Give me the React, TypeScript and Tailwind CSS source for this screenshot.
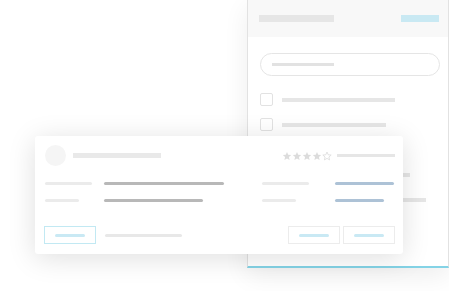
import React from 'react';

const Bar: React.FC<{ w: number; c: string; h?: number }> = ({ w, c, h = 3 }) => (
  <div className="rounded-full" style={{ width: w, height: h, background: c }} />
);

const Star: React.FC<{ filled: boolean }> = ({ filled }) => (
  <svg width="10" height="10" viewBox="0 0 24 24">
    <path
      d="M12 2.5l2.9 6.6 7.1.6-5.4 4.7 1.6 7-6.2-3.7-6.2 3.7 1.6-7L2 9.7l7.1-.6z"
      fill={filled ? '#dcdcdc' : 'none'}
      stroke="#dcdcdc"
      strokeWidth={filled ? 0 : 2}
      strokeLinejoin="round"
    />
  </svg>
);

const rows = [
  { w: 113 },
  { w: 104 },
  { w: 120 },
  { w: 128 },
  { w: 144 },
];

const App: React.FC = () => {
  return (
    <div className="relative w-[449px] h-[291px] bg-white overflow-hidden">
      {/* back panel */}
      <div className="absolute left-[247px] top-0 w-[202px] h-[268px] bg-white border-x border-[#e2e2e2] border-b-2 border-b-[#84d3e6] shadow-[0_8px_24px_rgba(0,0,0,0.07)]">
        <div className="h-[37px] bg-[#f8f8f8] flex items-center justify-between pl-[11px] pr-[9px]">
          <div className="w-[75px] h-[7px] bg-[#e6e6e6]" />
          <div className="w-[38px] h-[7px] bg-[#c9e9f3]" />
        </div>
        <div className="pl-[12px] pr-[8px] pt-[16px]">
          <div className="h-[23px] rounded-full border border-[#e5e5e5] flex items-center pl-[11px]">
            <div className="w-[62px] h-[3px] bg-[#e2e2e2]" />
          </div>
          <div className="mt-[17px] flex flex-col gap-[12px]">
            {rows.map((r, i) => (
              <div key={i} className="flex items-center gap-[9px] h-[13px]">
                <div className="w-[13px] h-[13px] rounded-[2px] border border-[#e2e2e2]" />
                <div className="h-[4px] bg-[#e6e6e6]" style={{ width: r.w }} />
              </div>
            ))}
          </div>
        </div>
      </div>

      {/* front card */}
      <div className="absolute left-[35px] top-[136px] w-[368px] h-[118px] bg-white rounded-[3px] shadow-[0_4px_28px_rgba(0,0,0,0.13)] pt-[9px] pl-[10px] pr-[8px]">
        <div className="flex items-center h-[21px]">
          <div className="w-[21px] h-[21px] rounded-full bg-[#f5f5f5]" />
          <div className="ml-[7px] w-[88px] h-[5px] bg-[#e9e9e9]" />
          <div className="ml-auto flex items-center gap-[0px]">
            <Star filled />
            <Star filled />
            <Star filled />
            <Star filled />
            <Star filled={false} />
          </div>
          <div className="ml-[5px] w-[58px] h-[3px] bg-[#e6e6e6]" />
        </div>

        <div className="mt-[16px] flex items-center">
          <div className="w-[59px]"><Bar w={47} c="#ebebeb" /></div>
          <div className="w-[158px]"><Bar w={120} c="#b8b8b8" /></div>
          <div className="w-[73px]"><Bar w={47} c="#ebebeb" /></div>
          <Bar w={59} c="#adc2d6" />
        </div>
        <div className="mt-[14px] flex items-center">
          <div className="w-[59px]"><Bar w={34} c="#ebebeb" /></div>
          <div className="w-[158px]"><Bar w={99} c="#b8b8b8" /></div>
          <div className="w-[73px]"><Bar w={34} c="#ebebeb" /></div>
          <Bar w={49} c="#adc2d6" />
        </div>

        <div className="mt-[24px] flex items-center">
          <div className="w-[52px] h-[18px] border border-[#c2e9f3] flex items-center justify-center -ml-[1px]">
            <Bar w={30} c="#c9e9f4" />
          </div>
          <div className="ml-[9px]"><Bar w={77} c="#e8e8e8" /></div>
          <div className="ml-auto flex gap-[3px]">
            <div className="w-[52px] h-[18px] border border-[#ececec] flex items-center justify-center">
              <Bar w={30} c="#c9e9f4" />
            </div>
            <div className="w-[52px] h-[18px] border border-[#ececec] flex items-center justify-center">
              <Bar w={30} c="#c9e9f4" />
            </div>
          </div>
        </div>
      </div>
    </div>
  );
};

export default App;
